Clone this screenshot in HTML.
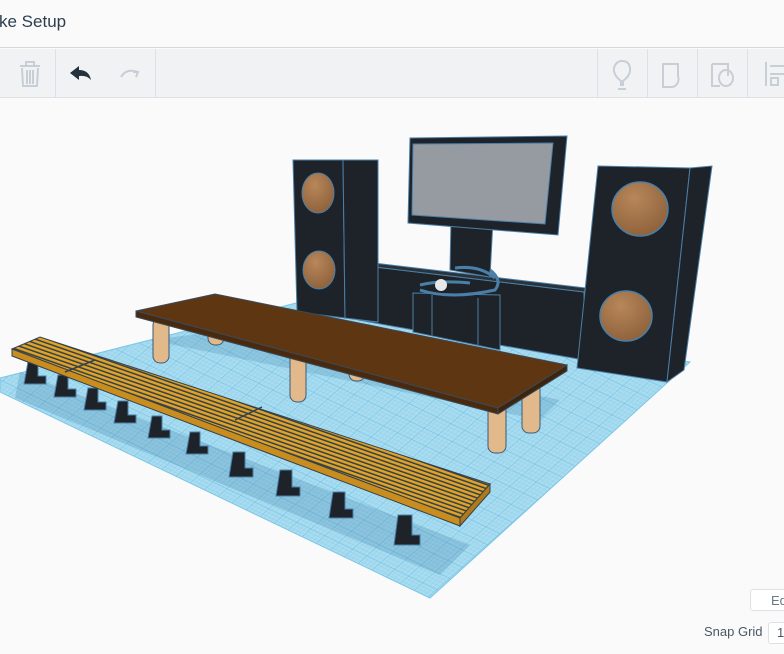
<!DOCTYPE html>
<html><head><meta charset="utf-8"><style>
*{margin:0;padding:0;box-sizing:border-box}
body{width:784px;height:654px;overflow:hidden;background:#fafafa;font-family:"Liberation Sans",sans-serif;position:relative}
.hdr{position:absolute;left:0;top:0;width:784px;height:48px;background:#fafafa;border-bottom:1px solid #d4d9df}
.hdr span{position:absolute;left:-1px;top:12px;font-size:17px;color:#2c3e50}
.tb{position:absolute;left:0;top:49px;width:784px;height:49px;background:#f1f2f4;border-bottom:1px solid #dde1e6}
.dv{position:absolute;top:0;width:1px;height:49px;background:#dde1e6}
svg{position:absolute;left:0;top:0}
.ed{position:absolute;left:750px;top:589px;width:40px;height:22px;border:1px solid #dde1e6;border-radius:3px;background:#fff;font-size:13px;color:#6b7785;padding:3px 0 0 20px}
.sg{position:absolute;left:704px;top:624px;font-size:13px;color:#4b5866}
.inp{position:absolute;left:768px;top:622px;width:30px;height:22px;border:1px solid #dde1e6;border-radius:3px;background:#fff;font-size:13px;color:#4b5866;padding:2px 0 0 8px}
</style></head><body>
<div class="hdr"><span>ke Setup</span></div>
<div class="tb">
<div class="dv" style="left:55px"></div><div class="dv" style="left:155px"></div>
<div class="dv" style="left:597px"></div><div class="dv" style="left:647px"></div><div class="dv" style="left:697px"></div><div class="dv" style="left:747px"></div>
</div>
<svg width="784" height="654" viewBox="0 0 784 654">
<defs>
<pattern id="g" width="14" height="14" patternUnits="userSpaceOnUse" patternTransform="matrix(1,0.48,-0.9,0.8,0,0)">
<rect width="14" height="14" fill="#a9dcf0"/><path d="M0 0H14M0 0V14" stroke="#6fbfe2" stroke-width="1"/>
<path d="M0 3.5H14M0 7H14M0 10.5H14M3.5 0V14M7 0V14M10.5 0V14" stroke="#8ccfe9" stroke-width="0.4"/>
</pattern>
<radialGradient id="cone" cx="0.4" cy="0.3" r="0.8"><stop offset="0" stop-color="#b8875a"/><stop offset="1" stop-color="#8a5e38"/></radialGradient>
<pattern id="slat" width="8" height="4.2" patternUnits="userSpaceOnUse" patternTransform="matrix(1,0.35,0,1,0,0)">
<rect width="8" height="4.2" fill="#e0a326"/><rect y="2.6" width="8" height="1.6" fill="#34404c"/>
</pattern>
</defs>
<g fill="none" stroke="#c7ced6" stroke-width="2">
<path d="M20 66H40M26 66V62H34V66M22 68L23 86H37L38 68M27 70V84M30 70V84M33 70V84"/>
<path d="M121 77Q126 68 138 72M133 72L138 72L136 77"/>
<path d="M621 86V81Q613 75 614 68Q616 61 622 61Q629 61 630 68Q631 75 623 81V86M618 89H626"/>
<path d="M663 64H678V76A7 8 0 0 1 672 87H663Z"/>
<path d="M712 64H728V76M712 64V86H720"/><ellipse cx="726" cy="78" rx="7" ry="8"/>
<path d="M766 62V86M770 66H784M770 74H784M771 78V85H778V78Z"/>
</g>
<path d="M70 73L79 66V70Q89 70 91 80Q87 75 79 76V80Z" fill="#23313d"/>
<polygon points="0,378 300,302 690,362 430,598 0,392" fill="url(#g)"/>
<polygon points="0,378 300,302 690,362 430,598 0,392" fill="none" stroke="#7ac6e6" stroke-width="1"/>
<polygon points="20,372 470,545 440,575 15,398" fill="#2a6f9a" opacity="0.22"/>
<polygon points="150,340 540,420 560,400 230,330" fill="#2a6f9a" opacity="0.2"/>
<polygon points="358,265 584,292 584,360 358,320" fill="#1e2329" stroke="#4a7fa8"/>
<polygon points="358,265 365,262 586,288 584,292" fill="#2a323a" stroke="#4a7fa8"/>
<polygon points="293,160 343,160 345,318 297,312" fill="#1e2329" stroke="#4a7fa8"/>
<polygon points="343,160 378,160 378,322 345,318" fill="#1e2329" stroke="#4a7fa8"/>
<ellipse cx="318" cy="193" rx="16" ry="20" fill="url(#cone)" stroke="#4a7fa8"/>
<ellipse cx="319" cy="270" rx="16" ry="19" fill="url(#cone)" stroke="#4a7fa8"/>
<polygon points="451,218 493,220 490,277 450,270" fill="#1e2329" stroke="#4a7fa8"/>
<polygon points="410,138 567,136 558,235 408,223" fill="#1e2329" stroke="#4a7fa8"/>
<polygon points="413,144 553,143 545,224 412,215" fill="#959ba1" stroke="#4a7fa8"/>
<polygon points="413,293 500,295 500,350 413,332" fill="#1e2329" stroke="#4a7fa8"/>
<path d="M432 295V335M478 298V346" stroke="#4a7fa8"/>
<path d="M420 290Q450 300 495 290Q503 280 490 270M455 268Q480 265 495 278M420 285Q440 280 470 283" fill="none" stroke="#4a7fa8" stroke-width="3"/>
<circle cx="441" cy="285" r="6" fill="#e8e8e8"/>
<polygon points="598,166 690,168 667,382 577,368" fill="#1e2329" stroke="#4a7fa8"/>
<polygon points="690,168 712,166 684,370 667,382" fill="#1e2329" stroke="#4a7fa8"/>
<ellipse cx="640" cy="209" rx="28" ry="27" fill="url(#cone)" stroke="#4a7fa8" stroke-width="1.5"/>
<ellipse cx="626" cy="316" rx="26" ry="25" fill="url(#cone)" stroke="#4a7fa8" stroke-width="1.5"/>
<g fill="#e2b98a" stroke="#3a5a78">
<rect x="208" y="325" width="16" height="20" rx="7"/>
<rect x="349" y="355" width="16" height="26" rx="7"/>
<rect x="153" y="318" width="16" height="45" rx="7"/>
<rect x="290" y="352" width="16" height="50" rx="7"/>
<rect x="522" y="383" width="18" height="50" rx="7"/>
<rect x="488" y="403" width="18" height="50" rx="7"/>
</g>
<polygon points="136,311 215,294 567,365 498,408" fill="#5e3612" stroke="#3a4a5a"/>
<polygon points="136,311 498,408 498,414 136,317" fill="#4a2a0e" stroke="#3a4a5a"/>
<polygon points="498,408 567,365 567,371 498,414" fill="#3f240c" stroke="#3a4a5a"/>
<g fill="#1e2329" stroke="#4a7fa8">
<path d="M28 362h10v14h8v8h-22z"/><path d="M58 375h10v14h8v8h-22z"/>
<path d="M88 388h10v14h8v8h-22z"/><path d="M118 401h10v14h8v8h-22z"/>
<path d="M152 416h10v14h8v8h-22z"/><path d="M190 432h10v14h8v8h-22z"/>
<path d="M233 452h12v16h8v9h-24z"/><path d="M280 470h12v17h8v9h-24z"/>
<path d="M333 492h12v17h8v9h-24z"/><path d="M398 515h14v20h8v10h-26z"/>
</g>
<polygon points="12,349 40,337 490,484 460,518" fill="url(#slat)" stroke="#34404c"/>
<polygon points="12,349 460,518 460,526 12,356" fill="#c98d1e" stroke="#34404c"/>
<polygon points="460,518 490,484 490,492 460,526" fill="#b07a18" stroke="#34404c"/>
<path d="M65 372L95 360M235 420L262 407" stroke="#34404c" stroke-width="1.5"/>
</svg>
<div class="ed">Ed</div>
<div class="sg">Snap Grid</div>
<div class="inp">1</div>
</body></html>
